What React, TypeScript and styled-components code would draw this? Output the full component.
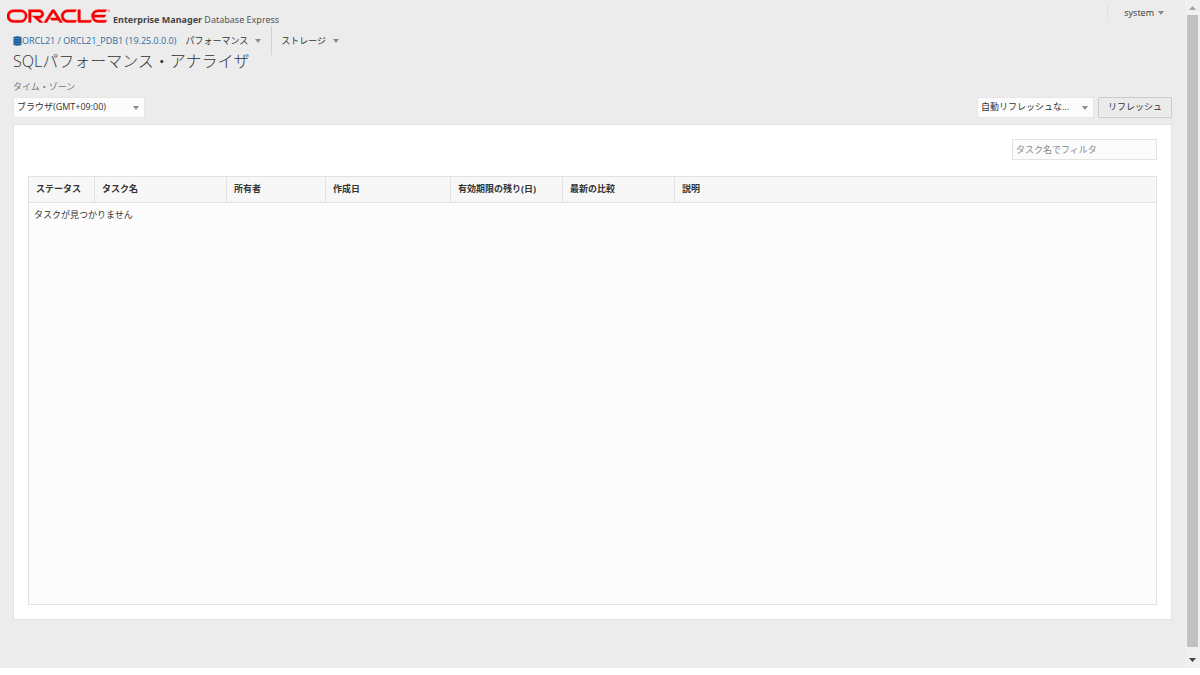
import React from "react";
import styled, { createGlobalStyle } from "styled-components";

const GlobalStyle = createGlobalStyle`
  *, *::before, *::after { box-sizing: border-box; }
  body {
    margin: 0;
    background: #fff;
    color: #333;
    font-family: "Open Sans", "Noto Sans CJK JP", sans-serif;
    font-size: 9px;
    line-height: 14px;
  }
  button, input, select { font: inherit; color: inherit; }
`;

const Frame = styled.div`
  display: flex;
  min-height: calc(100vh - 7px);
  background: #ececec;
`;

const Page = styled.div`
  flex: 1;
  min-width: 0;
  display: flex;
  flex-direction: column;
  padding-bottom: 48px;
`;

const TopBar = styled.header`
  display: flex;
  justify-content: space-between;
  height: 27px;
  padding: 4px 21px 0 7px;
`;

const Brand = styled.div`
  display: flex;
  align-items: flex-end;
  gap: 3px;
  white-space: nowrap;
`;

const Logo = styled.svg`
  width: 103px;
  height: 14px;
  margin-bottom: 4px;
`;

const Product = styled.span`
  font-family: "Noto Sans", sans-serif;
  color: #555;
  strong { color: #444; }
`;

const MenuButton = styled.button<{ $user?: boolean }>`
  display: flex;
  align-items: center;
  gap: ${(p) => (p.$user ? 4 : 7)}px;
  height: ${(p) => (p.$user ? 18 : 28)}px;
  padding: 0 0 0 ${(p) => (p.$user ? 16 : 9)}px;
  border: 0;
  border-left: ${(p) => (p.$user ? "1px solid #e0e0e0" : "0")};
  background: none;
  white-space: nowrap;
`;

const Arrow = styled.svg`
  width: 6px;
  height: 4px;
  flex: none;
  fill: #8c8c8c;
`;

const Nav = styled.nav`
  display: flex;
  align-items: center;
  height: 27px;
  padding-left: 13px;
`;

const DatabaseLink = styled.a`
  display: flex;
  align-items: center;
  color: #2a6ba6;
  text-decoration: none;
  white-space: nowrap;
`;

const DatabaseIcon = styled.svg`
  width: 9px;
  height: 10px;
`;

const NavDivider = styled.span`
  width: 1px;
  height: 29px;
  margin-left: 10px;
  background: #d2d2d2;
`;

const Main = styled.main`
  flex: 1;
  display: flex;
  flex-direction: column;
  padding: 0 13px;
`;

const Title = styled.h1`
  margin: 0;
  font-size: 16px;
  font-weight: 300;
  line-height: 14px;
`;

const Controls = styled.div`
  display: flex;
  justify-content: space-between;
  align-items: flex-end;
  margin: 12px 0 6px;
`;

const Field = styled.div`
  display: flex;
  flex-direction: column;
  gap: 3px;
  label { color: #777; }
`;

const Actions = styled.div`
  display: flex;
  gap: 4px;
`;

const SelectBox = styled.div<{ $width: number }>`
  display: grid;
  align-items: center;
  width: ${(p) => p.$width}px;
  > * { grid-area: 1 / 1; }
  > svg {
    justify-self: end;
    margin-right: 6px;
    pointer-events: none;
  }
`;

const Select = styled.select`
  appearance: none;
  width: 100%;
  height: 21px;
  padding: 0 16px 2px 3px;
  border: 1px solid #e6e6e6;
  border-radius: 0;
  background: #fcfcfc;
`;

const RefreshButton = styled.button`
  width: 74px;
  height: 21px;
  padding: 0 0 2px;
  border: 1px solid #ccc;
  border-radius: 1px;
  background: #ebebeb;
`;

const Panel = styled.section`
  flex: 1;
  display: flex;
  flex-direction: column;
  padding: 14px;
  border: 1px solid #e3e3e3;
  background: #fff;
`;

const Filter = styled.input`
  align-self: flex-end;
  width: 145px;
  height: 21px;
  margin-bottom: 16px;
  padding: 0 3px;
  border: 1px solid #e3e3e3;
  background: #fcfcfc;
  &::placeholder { color: #8a8a8a; opacity: 1; }
`;

const TableArea = styled.div`
  flex: 1;
  border: 1px solid #e2e2e2;
  background: #fcfcfc;
`;

const Table = styled.table`
  width: 100%;
  table-layout: fixed;
  border-collapse: separate;
  border-spacing: 0;
`;

const HeadCell = styled.th<{ $width?: number }>`
  width: ${(p) => (p.$width ? `${p.$width}px` : "auto")};
  height: 26px;
  padding: 0 7px 2px;
  border-bottom: 1px solid #e2e2e2;
  border-right: ${(p) => (p.$width ? "1px solid #e2e2e2" : "0")};
  background: #f7f7f7;
  text-align: left;
  white-space: nowrap;
`;

const Cell = styled.td`
  height: 24px;
  padding: 0 5px;
`;

const ScrollTrack = styled.div`
  flex: none;
  display: flex;
  flex-direction: column;
  align-items: center;
  width: 15px;
  padding: 6px 0;
  background: #f0f0f0;
`;

const ScrollThumb = styled.div`
  flex: 1;
  width: 11px;
  margin: 5px 0 11px;
  background: #c1c1c1;
`;

const ScrollArrow = styled.svg<{ $up?: boolean }>`
  width: 7px;
  height: 4px;
  fill: ${(p) => (p.$up ? "#a3a3a3" : "#444")};
`;

const DownArrow = () => (
  <Arrow viewBox="0 0 6 4" aria-hidden="true">
    <path d="M0 0H6L3 4Z" />
  </Arrow>
);

const OracleLogo = () => (
  <Logo viewBox="0 -1 238 32" role="img" aria-label="Oracle" preserveAspectRatio="xMinYMid meet">
    <path
      fill="#f80000"
      stroke="#f80000"
      strokeWidth="1"
      d="M99.61 19.52h15.24l-8.05-13L92 30h-6.73l18-28.17a4.29 4.29 0 0 1 7-.05L128.32 30h-6.73l-3.17-5.25H103l-3.39-5.23m69.93 5.23V.28h-5.72v26.88a2.76 2.76 0 0 0 .85 2 2.89 2.89 0 0 0 2.08.87h26l3.39-5.25h-26.6M75 20.38A10 10 0 0 0 75 .28H50V30h5.71V5.54h18.94a4.81 4.81 0 0 1 0 9.62H58.54L75.6 30h8.29L72.43 20.38H75M14.88 30h17.27a14.86 14.86 0 0 0 0-29.71H14.88a14.86 14.86 0 1 0 0 29.71m16.88-5.23h-16.5a9.62 9.62 0 0 1 0-19.23h16.5a9.62 9.62 0 1 1 0 19.23M140.25 30h17.63l3.34-5.23h-20.58a9.62 9.62 0 1 1 0-19.23h16.75l3.38-5.25h-20.52a14.86 14.86 0 1 0 0 29.71m69.87-5.23a9.62 9.62 0 0 1-9.26-7h24.42l3.36-5.24h-27.78a9.61 9.61 0 0 1 9.26-7h16.76l3.35-5.25h-20.5a14.86 14.86 0 0 0 0 29.71h17.63l3.35-5.23h-20.59"
    />
    <circle cx="235" cy="3" r="2" fill="none" stroke="#f80000" strokeWidth="1" />
  </Logo>
);

const columns: { label: string; width?: number }[] = [
  { label: "ステータス", width: 66 },
  { label: "タスク名", width: 132 },
  { label: "所有者", width: 99 },
  { label: "作成日", width: 125 },
  { label: "有効期限の残り(日)", width: 112 },
  { label: "最新の比較", width: 112 },
  { label: "説明" },
];

export default function App() {
  return (
    <>
      <GlobalStyle />
      <Frame>
        <Page>
          <TopBar>
            <Brand>
              <OracleLogo />
              <Product>
                <strong>Enterprise Manager</strong> Database Express
              </Product>
            </Brand>
            <MenuButton $user>
              system <DownArrow />
            </MenuButton>
          </TopBar>
          <Nav>
            <DatabaseLink href="#database">
              <DatabaseIcon viewBox="0 0 9 10" aria-hidden="true">
                <path fill="#1b5e9b" d="M.5 1Q4.500-.5 8.500 1V9Q4.500 10.500 .5 9Z" />
                <path stroke="#6a9ac4" strokeWidth=".5" fill="none" d="M.5 2.500H8.500M.5 5H8.500M.5 7.500H8.500" />
              </DatabaseIcon>
              ORCL21 / ORCL21_PDB1 (19.25.0.0.0)
            </DatabaseLink>
            <MenuButton>
              パフォーマンス <DownArrow />
            </MenuButton>
            <NavDivider />
            <MenuButton>
              ストレージ <DownArrow />
            </MenuButton>
          </Nav>
          <Main>
            <Title>SQLパフォーマンス・アナライザ</Title>
            <Controls>
              <Field>
                <label htmlFor="timezone">タイム・ゾーン</label>
                <SelectBox $width={132}>
                  <Select id="timezone">
                    <option>ブラウザ(GMT+09:00)</option>
                  </Select>
                  <DownArrow />
                </SelectBox>
              </Field>
              <Actions>
                <SelectBox $width={117}>
                  <Select aria-label="自動リフレッシュ">
                    <option>自動リフレッシュな...</option>
                  </Select>
                  <DownArrow />
                </SelectBox>
                <RefreshButton>リフレッシュ</RefreshButton>
              </Actions>
            </Controls>
            <Panel>
              <Filter type="text" placeholder="タスク名でフィルタ" aria-label="タスク名でフィルタ" />
              <TableArea>
                <Table>
                  <thead>
                    <tr>
                      {columns.map((c) => (
                        <HeadCell key={c.label} $width={c.width} scope="col">
                          {c.label}
                        </HeadCell>
                      ))}
                    </tr>
                  </thead>
                  <tbody>
                    <tr>
                      <Cell colSpan={columns.length}>タスクが見つかりません</Cell>
                    </tr>
                  </tbody>
                </Table>
              </TableArea>
            </Panel>
          </Main>
        </Page>
        <ScrollTrack aria-hidden="true">
          <ScrollArrow $up viewBox="0 0 7 4">
            <path d="M0 4H7L3.500 0Z" />
          </ScrollArrow>
          <ScrollThumb />
          <ScrollArrow viewBox="0 0 7 4">
            <path d="M0 0H7L3.500 4Z" />
          </ScrollArrow>
        </ScrollTrack>
      </Frame>
    </>
  );
}
